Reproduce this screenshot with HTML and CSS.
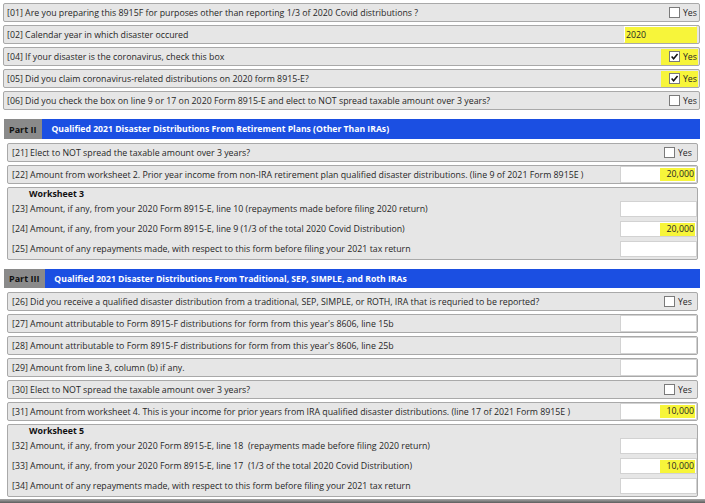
FILE: index.html
```html
<!DOCTYPE html>
<html>
<head>
<meta charset="utf-8">
<link rel="stylesheet" href="styles.css">
</head>
<body>
<div class="page">
  <section class="top">
    <div class="row"><span class="lbl">[01] Are you preparing this 8915F for purposes other than reporting 1/3 of 2020 Covid distributions ?</span><span class="chk"><span class="box"></span>Yes</span></div>
    <div class="row"><span class="lbl">[02] Calendar year in which disaster occured</span><span class="inp inp-year">2020</span></div>
    <div class="row"><span class="lbl">[04] If your disaster is the coronavirus, check this box</span><span class="chk hl"><span class="box"><svg viewBox="0 0 10 10" class="tick"><polyline points="1.8,5 4,7.6 8.4,2.2"/></svg></span>Yes</span></div>
    <div class="row"><span class="lbl">[05] Did you claim coronavirus-related distributions on 2020 form 8915-E?</span><span class="chk hl"><span class="box"><svg viewBox="0 0 10 10" class="tick"><polyline points="1.8,5 4,7.6 8.4,2.2"/></svg></span>Yes</span></div>
    <div class="row"><span class="lbl">[06] Did you check the box on line 9 or 17 on 2020 Form 8915-E and elect to NOT spread taxable amount over 3 years?</span><span class="chk"><span class="box"></span>Yes</span></div>
  </section>

  <section class="part part-2">
    <div class="part-head"><span class="part-no">Part II</span><span class="part-title">Qualified 2021 Disaster Distributions From Retirement Plans (Other Than IRAs)</span></div>
    <div class="rows">
      <div class="row"><span class="lbl">[21] Elect to NOT spread the taxable amount over 3 years?</span><span class="chk"><span class="box"></span>Yes</span></div>
      <div class="row"><span class="lbl">[22] Amount from worksheet 2. Prior year income from non-IRA retirement plan qualified disaster distributions. (line 9 of 2021 Form 8915E )</span><span class="inp"><span class="val">20,000</span></span></div>
      <div class="group">
        <div class="group-title">Worksheet 3</div>
        <div class="grow"><span class="lbl">[23] Amount, if any, from your 2020 Form 8915-E, line 10 (repayments made before filing 2020 return)</span><span class="inp"></span></div>
        <div class="grow"><span class="lbl">[24] Amount, if any, from your 2020 Form 8915-E, line 9 (1/3 of the total 2020 Covid Distribution)</span><span class="inp"><span class="val">20,000</span></span></div>
        <div class="grow"><span class="lbl">[25] Amount of any repayments made, with respect to this form before filing your 2021 tax return</span><span class="inp"></span></div>
      </div>
    </div>
  </section>

  <section class="part part-3">
    <div class="part-head"><span class="part-no">Part III</span><span class="part-title">Qualified 2021 Disaster Distributions From Traditional, SEP, SIMPLE, and Roth IRAs</span></div>
    <div class="rows">
      <div class="row"><span class="lbl">[26] Did you receive a qualified disaster distribution from a traditional, SEP, SIMPLE, or ROTH, IRA that is requried to be reported?</span><span class="chk"><span class="box"></span>Yes</span></div>
      <div class="row"><span class="lbl">[27] Amount attributable to Form 8915-F distributions for form from this year's 8606, line 15b</span><span class="inp"></span></div>
      <div class="row"><span class="lbl">[28] Amount attributable to Form 8915-F distributions for form from this year's 8606, line 25b</span><span class="inp"></span></div>
      <div class="row"><span class="lbl">[29] Amount from line 3, column (b) if any.</span><span class="inp"></span></div>
      <div class="row"><span class="lbl">[30] Elect to NOT spread the taxable amount over 3 years?</span><span class="chk"><span class="box"></span>Yes</span></div>
      <div class="row"><span class="lbl">[31] Amount from worksheet 4. This is your income for prior years from IRA qualified disaster distributions. (line 17 of 2021 Form 8915E )</span><span class="inp"><span class="val">10,000</span></span></div>
      <div class="group">
        <div class="group-title">Worksheet 5</div>
        <div class="grow"><span class="lbl">[32] Amount, if any, from your 2020 Form 8915-E, line 18 &nbsp;(repayments made before filing 2020 return)</span><span class="inp"></span></div>
        <div class="grow"><span class="lbl">[33] Amount, if any, from your 2020 Form 8915-E, line 17 &nbsp;(1/3 of the total 2020 Covid Distribution)</span><span class="inp"><span class="val">10,000</span></span></div>
        <div class="grow"><span class="lbl">[34] Amount of any repayments made, with respect to this form before filing your 2021 tax return</span><span class="inp"></span></div>
      </div>
    </div>
  </section>

  <div class="bottom-bar"></div>
</div>
</body>
</html>
```

FILE: styles.css
```css
* { box-sizing: border-box; }
html, body { margin: 0; padding: 0; background: #fff; }
body {
  font-family: "Open Sans", "Noto Sans", "Liberation Sans", sans-serif;
  font-size: 8.8px;
  color: #262626;
  width: 705px;
  height: 503px;
  overflow: hidden;
}
.page {
  display: flex;
  flex-direction: column;
  height: 503px;
  padding-top: 3px;
}
.top {
  display: flex;
  flex-direction: column;
  gap: 3px;
  margin: 0 5px 0 3px;
}
.row {
  height: 19px;
  display: flex;
  align-items: center;
  justify-content: space-between;
  background: #e6e6e6;
  border: 1px solid #a9a9a9;
  border-radius: 2px;
  padding-left: 3px;
}
.lbl { white-space: nowrap; }
.chk {
  display: flex;
  align-items: center;
  height: 16px;
  padding: 0 1px 0 8px;
  margin-right: 1px;
  gap: 3px;
}
.chk.hl { background: #f7f53a; }
.box {
  width: 11px;
  height: 11px;
  background: #fff;
  border: 1px solid #7a7a7a;
  display: flex;
  align-items: center;
  justify-content: center;
}
.tick { width: 9px; height: 9px; }
.tick polyline { fill: none; stroke: #111; stroke-width: 1.7; }
.inp {
  height: 17px;
  width: 77px;
  background: #fff;
  border: 1px solid #d2d2d2;
  display: flex;
  align-items: center;
  justify-content: flex-end;
  padding-right: 1px;
}
.inp-year {
  width: 73px;
  margin-right: 2px;
  justify-content: flex-start;
  background: #f7f53a;
  border-color: #fff #f7f53a #f7f53a #fff;
  padding-left: 1px;
}
.val {
  background: #f7f53a;
  padding: 1px 1px 1px 7px;
  line-height: 11px;
}
.part-head {
  display: flex;
  height: 20px;
  margin: 9px 5px 0 4px;
  font-weight: 700;
  font-size: 8.65px;
}
.part-3 .part-head { margin-top: 9px; height: 19px; }
.part-no {
  background: #8a8a8a;
  color: #111;
  display: flex;
  align-items: center;
  padding: 0 6px 0 5px;
  font-size: 9px;
}
.part-title {
  flex: 1;
  background: #1b4fe2;
  color: #fff;
  display: flex;
  align-items: center;
  padding-left: 9px;
}
.rows {
  display: flex;
  flex-direction: column;
  gap: 3px;
  margin: 4px 7px 0 7px;
}
.rows .row { padding-left: 4px; }
.rows .chk { margin-right: 4px; }
.group {
  background: #e6e6e6;
  border: 1px solid #a9a9a9;
  border-radius: 2px;
  padding: 0 0 0 4px;
  display: flex;
  flex-direction: column;
}
.group-title {
  height: 11px;
  line-height: 13px;
  font-weight: 700;
  padding-left: 17px;
  color: #111;
}
.grow {
  height: 20px;
  display: flex;
  align-items: center;
  justify-content: space-between;
}
.grow .inp { height: 16px; }
.bottom-bar {
  margin-top: auto;
  height: 4px;
  background: linear-gradient(#a8a8a8, #5c5c5c);
}
```
